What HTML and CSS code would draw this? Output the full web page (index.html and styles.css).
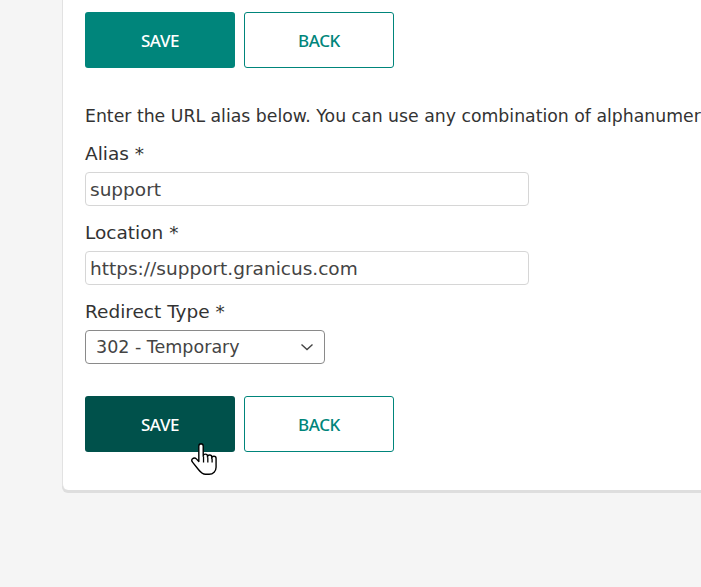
FILE: index.html
```html
<!DOCTYPE html>
<html>
<head>
<meta charset="utf-8">
<link rel="stylesheet" href="styles.css">
</head>
<body>
<div class="card">
  <div class="actions">
    <button class="btn btn-primary">SAVE</button>
    <button class="btn btn-outline">BACK</button>
  </div>
  <p class="intro">Enter the URL alias below. You can use any combination of alphanumeric characters.</p>
  <div class="field">
    <label class="label">Alias *</label>
    <div class="input wide">support</div>
  </div>
  <div class="field">
    <label class="label">Location *</label>
    <div class="input wide">https://support.granicus.com</div>
  </div>
  <div class="field">
    <label class="label">Redirect Type *</label>
    <div class="input select">
      <span>302 - Temporary</span>
      <svg class="chev" width="14" height="8" viewBox="0 0 14 8"><path d="M1.5 1.5 L7 6.5 L12.5 1.5" fill="none" stroke="#444" stroke-width="1.4"/></svg>
    </div>
  </div>
  <div class="actions bottom">
    <button class="btn btn-primary active">SAVE</button>
    <button class="btn btn-outline">BACK</button>
    <svg class="cursor" width="30" height="41" viewBox="0 0 28 38">
      <path d="M9.5 1.5c-1.3 0-2.2 1-2.2 2.2v14.3l-2.3-2.4c-1-1-2.7-1-3.6 0-0.8 0.8-0.8 2.1 0 3l5.7 7.2c1.8 2.3 3.5 4.2 6.4 4.2h3.4c3.8 0 6.5-3 6.5-6.6v-8.2c0-1.1-0.9-2-2-2s-2 0.9-2 2v-1.2c0-1.1-0.9-2-2-2s-2 0.9-2 2v-0.8c0-1.1-0.9-2-2-2s-2 0.9-2 2V3.7c0-1.2-0.9-2.2-2.2-2.2z" fill="#fff" stroke="#000" stroke-width="1.3" stroke-linejoin="round"/>
      <path d="M11.7 13.5v5.5M15.7 14.3v4.7M19.7 15.5v3.5" stroke="#000" stroke-width="1.2" fill="none"/>
    </svg>
  </div>
</div>
</body>
</html>
```
FILE: styles.css
```css
html, body {
  margin: 0;
  padding: 0;
}
body {
  background: #f5f5f5;
  font-family: "DejaVu Sans", "Noto Sans", sans-serif;
  color: #333;
  width: 701px;
  height: 587px;
  overflow: hidden;
}
.card {
  margin-left: 62px;
  width: 700px;
  background: #fff;
  border-left: 1px solid #e2e2e2;
  border-bottom-left-radius: 6px;
  box-shadow: 0 3px 0 #dedede;
  padding: 12px 0 38px 22px;
  box-sizing: border-box;
  overflow: hidden;
}
.actions {
  display: flex;
  gap: 9px;
  position: relative;
}
.actions.bottom {
  margin-top: 32px;
}
.btn {
  width: 150px;
  height: 56px;
  border-radius: 3px;
  font-family: "Noto Sans", sans-serif;
  font-size: 17px;
  font-weight: 500;
  letter-spacing: -0.4px;
  cursor: pointer;
  box-sizing: border-box;
}
.btn-primary {
  background: #00857b;
  color: #fff;
  border: none;
}
.btn-primary.active {
  background: #00514b;
}
.btn-outline {
  background: #fff;
  color: #00857b;
  border: 1px solid #00857b;
}
.intro {
  margin: 36px 0 0;
  font-size: 17.3px;
  line-height: 24px;
  white-space: nowrap;
  color: #333;
}
.field {
  margin-top: 14px;
}
.field + .field {
  margin-top: 15px;
}
.label {
  display: block;
  font-size: 18.5px;
  line-height: 24px;
  color: #333;
  margin-bottom: 6px;
}
.input {
  height: 34px;
  box-sizing: border-box;
  border: 1px solid #d6d6d6;
  border-radius: 4px;
  padding: 0 4px;
  display: flex;
  align-items: center;
  font-size: 18.5px;
  color: #444;
}
.wide {
  width: 444px;
}
.select {
  width: 240px;
  border-color: #8a8a8a;
  padding: 0 10px;
  justify-content: space-between;
  font-size: 17.5px;
}
.cursor {
  position: absolute;
  left: 106px;
  top: 46px;
}
```
